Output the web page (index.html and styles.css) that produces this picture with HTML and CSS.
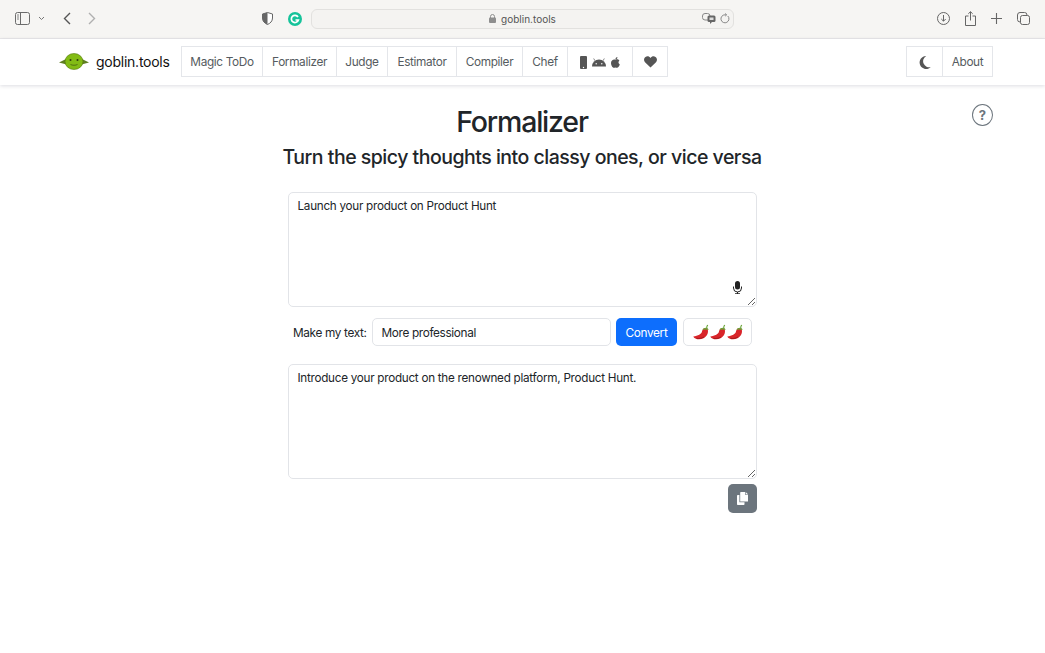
FILE: index.html
```html
<!DOCTYPE html>
<html>
  <head>
    <title>goblin.tools</title>
    <meta charset="UTF-8">
    <link rel="stylesheet" href="styles.css">
  </head>
  <body>
    <!-- Browser toolbar -->
    <div class="toolbar">
      <div class="tb-left">
        <svg class="tb-icon" width="15" height="13" viewBox="0 0 15 13" fill="none" stroke="#6b6b6b"><rect x="0.5" y="0.5" width="14" height="12" rx="2"/><path d="M5.5 .5v12" /><path d="M2 3h2M2 5h2M2 7h2" stroke-width=".8"/></svg>
        <svg class="tb-chevron" width="7" height="5" viewBox="0 0 7 5" fill="none" stroke="#777"><path d="M1 1l2.5 2.5L6 1"/></svg>
        <svg class="tb-back" width="8" height="13" viewBox="0 0 8 13" fill="none" stroke="#555" stroke-width="1.4"><path d="M7 1L1.5 6.5 7 12"/></svg>
        <svg class="tb-forward" width="8" height="13" viewBox="0 0 8 13" fill="none" stroke="#b0b0b0" stroke-width="1.4"><path d="M1 1l5.5 5.5L1 12"/></svg>
      </div>
      <div class="tb-mid">
        <svg width="11" height="13" viewBox="0 0 11 13"><path d="M5.5 .5L10.5 2v4c0 3.2-2.2 5.3-5 6.5C2.700 11.300 .5 9.200 .5 6V2z" fill="#fff" stroke="#666"/><path d="M5.500 .5L.5 2v4c0 3.200 2.200 5.300 5 6.500z" fill="#666"/></svg>
        <svg class="tb-grammarly" width="14" height="14" viewBox="0 0 14 14"><circle cx="7" cy="7" r="7" fill="#15c39a"/><path d="M10 5a3.600 3.600 0 1 0 .4 3H7.500" fill="none" stroke="#fff" stroke-width="1.700"/></svg>
        <div class="url-bar">
          <span class="url-text">
            <svg width="7" height="9" viewBox="0 0 7 9"><rect y="3.500" width="7" height="5.500" rx="1" fill="#8e8e8e"/><path d="M1.500 4V2.500a2 2 0 0 1 4 0V4" fill="none" stroke="#8e8e8e"/></svg>
            goblin.tools
          </span>
          <span class="url-icons">
            <svg width="14" height="11" viewBox="0 0 14 11"><rect x=".5" y=".5" width="7.500" height="6.500" rx="2.500" fill="#f4f3f1" stroke="#888"/><rect x="5.500" y="2.500" width="8" height="6.500" rx="1.500" fill="#666"/><path d="M8 8.500V11l2.500-2.500z" fill="#666"/><rect x="7.500" y="4.500" width="4" height="2.500" fill="#ddd"/></svg>
            <svg width="10" height="11" viewBox="0 0 10 11" fill="none" stroke="#888"><path d="M7.800 3a4 4 0 1 1-2.800-1.200H6.500"/><path d="M5 .3l1.700 1.500L5 3.300" stroke-width=".8"/></svg>
          </span>
        </div>
      </div>
      <div class="tb-right">
        <svg width="13" height="13" viewBox="0 0 13 13" fill="none" stroke="#666"><circle cx="6.500" cy="6.500" r="6"/><path d="M6.500 3v6M4.300 7l2.200 2.200L8.700 7"/></svg>
        <svg width="11" height="15" viewBox="0 0 11 15" fill="none" stroke="#666"><path d="M3.500 5H.5v9.500h10V5h-3M5.500 9.500V.8M3.300 2.800L5.500 .7l2.200 2.100"/></svg>
        <svg width="11" height="11" viewBox="0 0 11 11" fill="none" stroke="#666" stroke-width="1.100"><path d="M5.500 0v11M0 5.500h11"/></svg>
        <svg width="13" height="13" viewBox="0 0 13 13" fill="none" stroke="#666"><rect x="3.500" y="3.500" width="9" height="9" rx="2"/><path d="M3.500 10h-.5a2.500 2.500 0 0 1-2.500-2.500V3A2.500 2.500 0 0 1 3 .5h4.500A2.500 2.500 0 0 1 10 3v.5"/></svg>
      </div>
    </div>

    <!-- Site nav -->
    <nav class="site-nav">
      <div class="brand">
        <svg width="30" height="17" viewBox="0 0 30 17">
          <path d="M8 5.500L0 9.500l7.500 2zM22 5.500l8 4-7.500 2z" fill="#5f7f22"/>
          <ellipse cx="15" cy="8.500" rx="9" ry="8" fill="#82bb14" stroke="#55770f" stroke-width=".6"/>
          <circle cx="11.500" cy="7" r="1" fill="#2c3a0c"/><circle cx="18.500" cy="7" r="1" fill="#2c3a0c"/>
          <path d="M11.500 11.500c2 1 5 1 7 0" fill="none" stroke="#3c5210" stroke-width=".7"/>
        </svg>
        <span class="brand-name">goblin.tools</span>
      </div>
      <div class="btn-group main-links">
        <a class="nav-btn">Magic ToDo</a>
        <a class="nav-btn">Formalizer</a>
        <a class="nav-btn">Judge</a>
        <a class="nav-btn">Estimator</a>
        <a class="nav-btn">Compiler</a>
        <a class="nav-btn">Chef</a>
        <a class="nav-btn apps">
          <svg width="7" height="13" viewBox="0 0 7 13"><path d="M1 0h5a1 1 0 0 1 1 1v11a1 1 0 0 1-1 1H1a1 1 0 0 1-1-1V1a1 1 0 0 1 1-1z" fill="#555"/><circle cx="3.500" cy="11.500" r=".7" fill="#fff"/></svg>
          <svg width="14" height="9" viewBox="0 0 14 9"><path d="M0 8.500a7 7 0 0 1 14 0z" fill="#555"/><path d="M3 2.800L1.700.5M11 2.800L12.300.5" stroke="#555" stroke-width=".7"/><circle cx="4.200" cy="5.700" r=".7" fill="#fff"/><circle cx="9.800" cy="5.700" r=".7" fill="#fff"/></svg>
          <svg width="9" height="11" viewBox="0 0 9 11"><path d="M4.500 2.700C5.500 2 7.400 2 8.400 3.600 7 4.500 7.200 6.700 8.800 7.400 8.200 9 7.200 10.800 6 10.800c-.7 0-1-.4-1.600-.4s-1 .4-1.600.4C1.500 10.800 0 8.300 0 6c0-3 2.700-4.200 4.500-3.300z" fill="#555"/><path d="M4.400 2.400C4.400 1.200 5.300.2 6.400 0c.1 1.300-.8 2.300-2 2.400z" fill="#555"/></svg>
        </a>
        <a class="nav-btn">
          <svg width="13" height="12" viewBox="0 0 13 12"><path d="M6.500 11.500L1 6.200C-.5 4.600-.2 2 1.500.9 3.200-.2 5.400.300 6.500 2 7.600.3 9.800-.2 11.500.9 13.200 2 13.500 4.600 12 6.200z" fill="#555"/></svg>
        </a>
      </div>
      <div class="btn-group end-links">
        <a class="nav-btn">
          <svg width="12" height="13" viewBox="0 0 12 13"><path d="M7.200 0A6.500 6.500 0 1 0 11.800 11 6 6 0 0 1 7.200 0z" fill="#555"/></svg>
        </a>
        <a class="nav-btn">About</a>
      </div>
    </nav>

    <main class="content">
      <button class="help-btn">?</button>
      <h1>Formalizer</h1>
      <h2>Turn the spicy thoughts into classy ones, or vice versa</h2>

      <div class="form-col">
        <div class="text-wrap">
          <textarea class="text-box">Launch your product on Product Hunt</textarea>
          <svg class="mic" width="9" height="13" viewBox="0 0 9 13" fill="#222"><rect x="2" y="0" width="5" height="8.500" rx="2.500"/><path d="M.5 5.500v1.500a4 4 0 0 0 8 0V5.500" fill="none" stroke="#222"/><path d="M4 11h1v1.200h2v.8H2v-.8h2z"/></svg>
        </div>

        <div class="convert-row">
          <label class="row-label">Make my text:</label>
          <div class="style-input">More professional</div>
          <button class="convert-btn">Convert</button>
          <button class="spice-btn">
            <svg width="16" height="17" viewBox="0 0 16 16"><use href="#chili"/></svg>
            <svg width="16" height="17" viewBox="0 0 16 16"><use href="#chili"/></svg>
            <svg width="16" height="17" viewBox="0 0 16 16"><use href="#chili"/></svg>
          </button>
        </div>

        <textarea class="text-box">Introduce your product on the renowned platform, Product Hunt.</textarea>

        <div class="copy-row">
          <button class="copy-btn">
            <svg width="11" height="13" viewBox="0 0 11 13" fill="#fff"><path d="M4 0h4v2.800h3V9.500H3.200V.8A.8.8 0 0 1 4 0z"/><path d="M8.600 0L11 2.300H8.600z"/><path d="M0 3.800a.8.800 0 0 1 .8-.8h1.600v7.300h5.100v1.900a.8.800 0 0 1-.8.800H.8a.8.800 0 0 1-.8-.8z"/></svg>
          </button>
        </div>
      </div>
    </main>

    <svg class="defs" width="0" height="0">
      <symbol id="chili" viewBox="0 0 16 16">
        <path d="M14.500 4C11 2.500 9.500 4.500 9 7 8.500 9.500 5 11.500.3 12c1 2.500 6 4 10.200 1.800C14 12 16 8 14.500 4z" fill="#d9252a"/>
        <path d="M11 12.500C8.500 14 5.500 14.300 3.500 13.800" stroke="#8f1418" stroke-width=".7" fill="none"/>
        <path d="M9.500 5.500c1-2 3-2.800 5-1.800.7.400 1 1 1 1.800-1.500-.8-4-.8-6 0z" fill="#6aa53a"/>
        <path d="M13.700 3.500C13.700 2.300 14 1.200 14.800.3" stroke="#6aa53a" stroke-width="1.100" fill="none"/>
      </symbol>
    </svg>
  </body>
</html>
```

FILE: styles.css
```css
* {
  box-sizing: border-box;
}

body {
  margin: 0;
  background-color: #fff;
  color: #212529;
  font-family: Inter, "Liberation Sans", sans-serif;
  font-size: 13px;
}

/* Browser toolbar */
.toolbar {
  display: flex;
  align-items: center;
  height: 39px;
  padding-bottom: 1px;
  background-color: #f6f5f3;
  border-bottom: 1px solid #e9e8ea;
}

.tb-left {
  display: flex;
  align-items: center;
  width: 262px;
  padding-left: 15px;
}

.tb-chevron {
  margin-left: 8px;
}

.tb-back {
  margin-left: 18px;
}

.tb-forward {
  margin-left: 17px;
}

.tb-mid {
  display: flex;
  align-items: center;
  width: 472px;
}

.tb-grammarly {
  margin-left: 15px;
}

.url-bar {
  display: flex;
  align-items: center;
  justify-content: center;
  position: relative;
  width: 423px;
  height: 20px;
  margin-left: 9px;
  background-color: #f4f3f1;
  border: 1px solid #e2e1df;
  border-radius: 6px;
}

.url-text {
  display: flex;
  align-items: center;
  gap: 5px;
  color: #555;
  font-size: 10px;
}

.url-icons {
  position: absolute;
  top: 3px;
  right: 3px;
  display: flex;
  align-items: center;
  gap: 4px;
}

.tb-right {
  display: flex;
  align-items: center;
  gap: 15px;
  margin-left: 203px;
}

/* Site nav */
.site-nav {
  display: flex;
  align-items: center;
  height: 46px;
  padding: 0 52px 1px 59px;
  background-color: #fff;
  box-shadow: 0 1px 4px rgba(0, 0, 40, 0.14);
}

.brand {
  display: flex;
  align-items: center;
  gap: 7px;
  width: 122px;
}

.brand-name {
  color: #111;
  font-size: 14px;
  letter-spacing: -0.25px;
  white-space: nowrap;
}

.btn-group {
  display: grid;
  height: 31px;
  border: 1px solid #e4e6ea;
}

.main-links {
  grid-template-columns: 80px 74px 51px 69px 66px 45px 65px 35px;
}

.end-links {
  grid-template-columns: 35px 50px;
  margin-left: auto;
}

.nav-btn {
  display: flex;
  align-items: center;
  justify-content: center;
  gap: 5px;
  padding-top: 1px;
  color: #555b60;
  font-size: 11.800px;
  letter-spacing: -0.35px;
  border-left: 1px solid #e4e6ea;
  white-space: nowrap;
}

.btn-group .nav-btn:first-child {
  border-left: none;
}

/* Main content */
.content {
  position: relative;
  display: flex;
  flex-direction: column;
  align-items: center;
  padding-top: 20px;
}

.help-btn {
  position: absolute;
  top: 19px;
  right: 52px;
  width: 21px;
  height: 22px;
  padding: 0;
  color: #6c757d;
  font-family: Inter, sans-serif;
  font-size: 13px;
  font-weight: 700;
  background: none;
  border: 1px solid #6c757d;
  border-radius: 50%;
}

h1 {
  margin: 0 1px 0 0;
  height: 34px;
  color: #212529;
  font-size: 28.500px;
  font-weight: 500;
  letter-spacing: -1.2px;
  line-height: 34px;
}

h2 {
  margin: 6px 1px 0 0;
  height: 24px;
  color: #212529;
  font-size: 19.500px;
  font-weight: 500;
  letter-spacing: -0.5px;
  line-height: 24px;
}

.form-col {
  display: flex;
  flex-direction: column;
  width: 469px;
  margin-top: 23px;
}

.text-wrap {
  position: relative;
  height: 115px;
}

.text-box {
  display: block;
  width: 100%;
  height: 115px;
  padding: 5px 8.500px;
  color: #212529;
  font-family: Inter, "Liberation Sans", sans-serif;
  font-size: 11.700px;
  letter-spacing: -0.27px;
  line-height: 16px;
  background-color: #fff;
  border: 1px solid #e2e4e8;
  border-radius: 5px;
  outline: none;
}

.mic {
  position: absolute;
  right: 15px;
  bottom: 13px;
}

.convert-row {
  display: flex;
  align-items: center;
  height: 28px;
  margin: 11px 0 18px;
  padding: 0 5px;
}

.row-label {
  width: 79px;
  padding-top: 1px;
  color: #212529;
  font-size: 11.800px;
  letter-spacing: -0.35px;
  white-space: nowrap;
}

.style-input {
  display: flex;
  align-items: center;
  width: 239px;
  height: 28px;
  padding: 1px 0 0 8.500px;
  font-size: 11.800px;
  letter-spacing: -0.35px;
  border: 1px solid #e2e4e8;
  border-radius: 5px;
}

.convert-btn {
  width: 61px;
  height: 28px;
  margin-left: 5px;
  padding: 1px 0 0;
  color: #fff;
  font-family: Inter, sans-serif;
  font-size: 11.800px;
  letter-spacing: -0.35px;
  background-color: #0d6efd;
  border: none;
  border-radius: 5px;
}

.spice-btn {
  display: flex;
  align-items: center;
  justify-content: center;
  gap: 1px;
  width: 69px;
  height: 28px;
  margin-left: 6px;
  padding: 0;
  background: #fff;
  border: 1px solid #e2e4e8;
  border-radius: 5px;
}

.copy-row {
  display: flex;
  justify-content: flex-end;
  margin-top: 5px;
}

.copy-btn {
  display: flex;
  align-items: center;
  justify-content: center;
  width: 29px;
  height: 29px;
  padding: 0;
  background-color: #6c757d;
  border: none;
  border-radius: 5px;
}

.defs {
  position: absolute;
}
```
